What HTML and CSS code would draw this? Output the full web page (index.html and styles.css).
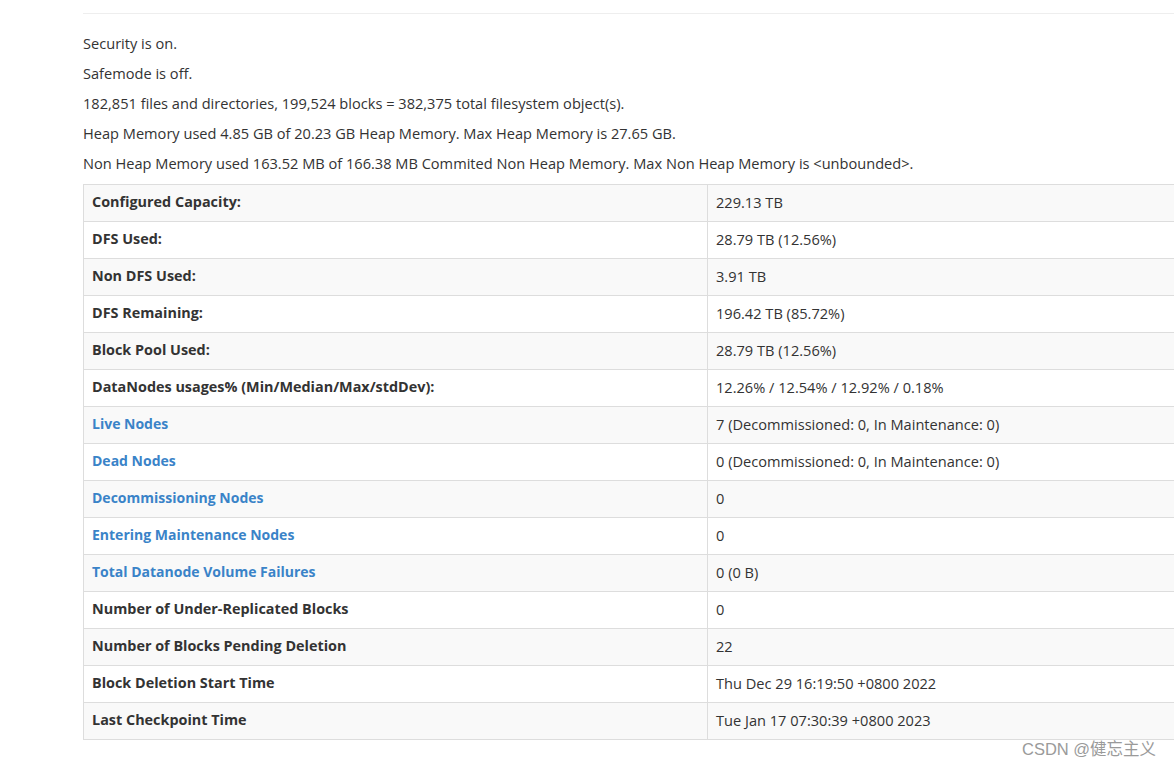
FILE: index.html
```html
<!DOCTYPE html>
<html>
<head>
<meta charset="utf-8">
<link rel="stylesheet" href="styles.css">
</head>
<body>
<div class="page">
  <div class="rule"></div>
  <p>Security is on.</p>
  <p>Safemode is off.</p>
  <p>182,851 files and directories, 199,524 blocks = 382,375 total filesystem object(s).</p>
  <p>Heap Memory used 4.85 GB of 20.23 GB Heap Memory. Max Heap Memory is 27.65 GB.</p>
  <p>Non Heap Memory used 163.52 MB of 166.38 MB Commited Non Heap Memory. Max Non Heap Memory is &lt;unbounded&gt;.</p>
  <table class="summary">
    <tr><th>Configured Capacity:</th><td>229.13 TB</td></tr>
    <tr><th>DFS Used:</th><td>28.79 TB (12.56%)</td></tr>
    <tr><th>Non DFS Used:</th><td>3.91 TB</td></tr>
    <tr><th>DFS Remaining:</th><td>196.42 TB (85.72%)</td></tr>
    <tr><th>Block Pool Used:</th><td>28.79 TB (12.56%)</td></tr>
    <tr><th>DataNodes usages% (Min/Median/Max/stdDev):</th><td>12.26% / 12.54% / 12.92% / 0.18%</td></tr>
    <tr><th><a href="#">Live Nodes</a></th><td>7 (Decommissioned: 0, In Maintenance: 0)</td></tr>
    <tr><th><a href="#">Dead Nodes</a></th><td>0 (Decommissioned: 0, In Maintenance: 0)</td></tr>
    <tr><th><a href="#">Decommissioning Nodes</a></th><td>0</td></tr>
    <tr><th><a href="#">Entering Maintenance Nodes</a></th><td>0</td></tr>
    <tr><th><a href="#">Total Datanode Volume Failures</a></th><td>0 (0 B)</td></tr>
    <tr><th>Number of Under-Replicated Blocks</th><td>0</td></tr>
    <tr><th>Number of Blocks Pending Deletion</th><td>22</td></tr>
    <tr><th>Block Deletion Start Time</th><td>Thu Dec 29 16:19:50 +0800 2022</td></tr>
    <tr><th>Last Checkpoint Time</th><td>Tue Jan 17 07:30:39 +0800 2023</td></tr>
  </table>
</div>
<div class="wm wm1">321242</div>
<div class="wm wm2">321242</div>
<div class="wm wm3">321242</div>
<div class="wm wm4">321242</div>
<div class="wm wm5">321242</div>
<div class="wm wm6">321242</div>
<div class="csdn">CSDN @健忘主义</div>
</body>
</html>
```
FILE: styles.css
```css
html, body {
  margin: 0;
  padding: 0;
  overflow: hidden;
  background: #fff;
}
body {
  width: 1174px;
  height: 768px;
  position: relative;
  font-family: "Open Sans", "Noto Sans", "Noto Sans CJK SC", sans-serif;
  font-size: 14.6px;
  line-height: 20px;
  color: #333;
}
.page {
  width: 1250px;
  padding-left: 83px;
  padding-top: 13px;
}
.rule {
  border-top: 1px solid #eee;
  margin-bottom: 19px;
}
p {
  margin: 0 0 10px 0;
  white-space: nowrap;
}
.summary {
  margin-top: 11px;
  width: 1248px;
  border-collapse: collapse;
  border: 1px solid #ddd;
}
.summary th, .summary td {
  border: 1px solid #ddd;
  padding: 7px 8px 9px 8px;
  height: 20px;
  text-align: left;
  vertical-align: top;
  white-space: nowrap;
}
.summary th {
  width: 607px;
  font-weight: bold;
  font-size: 14.4px;
}
.summary tr:nth-child(odd) {
  background: #f9f9f9;
}
.summary a {
  color: #3a83c8;
  text-decoration: none;
  font-size: 14px;
}
.wm {
  position: absolute;
  font-size: 40px;
  line-height: 40px;
  color: rgba(0, 0, 0, 0.025);
  transform: rotate(-45deg);
  pointer-events: none;
  font-family: "Open Sans", sans-serif;
}
.wm1 { left: 180px; top: 80px; }
.wm2 { left: 500px; top: 160px; }
.wm3 { left: 860px; top: 100px; }
.wm4 { left: 380px; top: 500px; }
.wm5 { left: 760px; top: 420px; }
.wm6 { left: 1000px; top: 620px; }
.csdn {
  position: absolute;
  left: 1022px;
  top: 738px;
  font-size: 16.5px;
  line-height: 22px;
  color: #9a9a9a;
  font-family: "Liberation Sans", "Noto Sans CJK SC", sans-serif;
}
```
